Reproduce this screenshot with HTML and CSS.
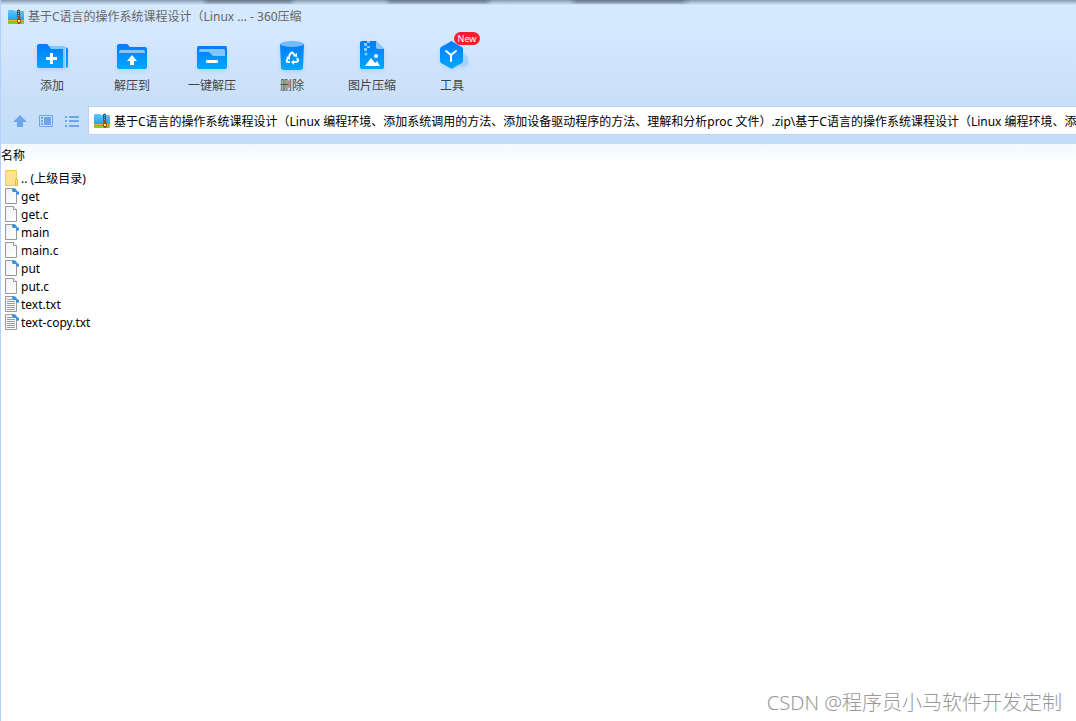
FILE: index.html
```html
<!DOCTYPE html>
<html lang="zh-CN">
<head>
<meta charset="utf-8">
<meta name="viewport" content="width=device-width, initial-scale=1">
<title>360压缩</title>
<link rel="stylesheet" href="styles.css">
</head>
<body>
<svg class="defs" aria-hidden="true">
  <defs>
    <linearGradient id="blue" x1="0" y1="0" x2="0" y2="1"><stop offset="0" stop-color="#007bfb"/><stop offset="1" stop-color="#01a8fd"/></linearGradient>
    <linearGradient id="sky" x1="0" y1="0" x2="0" y2="1"><stop offset="0" stop-color="#5dc8fa"/><stop offset="1" stop-color="#239bf0"/></linearGradient>
    <linearGradient id="paper" x1="0" y1="0" x2="1" y2="1"><stop offset="0" stop-color="#eef1f4"/><stop offset="1" stop-color="#fff"/></linearGradient>
    <symbol id="zip" viewBox="0 0 16 16">
      <path d="M0 2q0-1 1-1h5l1 1h8q1 0 1 1v9H0z" fill="url(#sky)"/>
      <path d="M0 11h16v1H0z" fill="#f9b01b"/><path d="M0 12h16v1H0z" fill="#f4812e"/><path d="M0 13h16v1q0 1-1 1H1q-1 0-1-1z" fill="#86c82d"/>
      <path d="M9 1h3v7H9z" fill="#285c94"/><path d="M10 0h1v1h-1zm0 2h1v1h-1zm0 2h1v1h-1zm0 2h1v1h-1z" fill="#d99a55"/>
      <path d="M10 7h2l1 5q0 3-2 3t-2-3z" fill="#a4480b"/><path d="M10 11h2v2h-2z" fill="#ffe5a4"/>
    </symbol>
    <symbol id="page" viewBox="0 0 14 16">
      <path d="M.5.5h8l3 3v12H.5z" fill="url(#paper)" stroke="#999"/><path d="M8.5.5v3h3" fill="#fff" stroke="#999"/>
    </symbol>
    <symbol id="mark" viewBox="0 0 14 16">
      <path d="M7 1l2-1 2 1 1 2 2 1v2l-1 1-2-1V4H8L7 3z" fill="#3a93dc"/>
    </symbol>
    <symbol id="lines" viewBox="0 0 14 16"><path d="M2 3.5h5M2 5.5h8M2 7.5h8M2 9.5h8M2 11.5h8M2 13.5h8" stroke="#9b9b9b"/></symbol>
  </defs>
</svg>
<div class="window">
  <header class="chrome">
    <div class="titlebar">
      <svg class="zip" viewBox="0 0 16 16"><use href="#zip"/></svg>
      <h1 class="title">基于C语言的操作系统课程设计（Linux ... - 360压缩</h1>
    </div>
    <div class="toolbar" role="toolbar">
      <button class="tool" type="button">
        <svg class="tool-icon" viewBox="0 0 40 36">
          <path d="M14 10h19v2H16z" fill="#7dc1fd"/><path d="M5 8q0-2 2-2h8l3 3h15v21H7q-2 0-2-2z" fill="url(#blue)"/>
          <path d="M17 8h14q2 0 2 2v20h-2V11H19z" fill="#83c7fe"/><path d="M34 9q2 1 2 3v16q0 2-2 2z" fill="url(#blue)"/>
          <path d="M19.500 15v11M14 20.500h11" stroke="#fff" stroke-width="3"/>
        </svg><span>添加</span>
      </button>
      <button class="tool" type="button">
        <svg class="tool-icon" viewBox="0 0 40 36">
          <path d="M5 8q0-2 2-2h8l3 3h15q2 0 2 2v18q0 2-2 2H7q-2 0-2-2z" fill="url(#blue)"/>
          <path d="M7 15v-1q0-2 2-2h22q2 0 2 2v1z" fill="#83c5ff"/><path d="M20 17l5 6h-3v4h-4v-4h-3z" fill="#fff"/>
        </svg><span>解压到</span>
      </button>
      <button class="tool" type="button">
        <svg class="tool-icon" viewBox="0 0 40 36">
          <rect x="5" y="8" width="30" height="23" rx="2" fill="url(#blue)"/>
          <path d="M7 14v-1q0-2 2-2h22q2 0 2 2v5H21l-4-4z" fill="#83c5ff"/><rect x="14" y="22" width="12" height="3" rx="1" fill="#fff"/>
        </svg><span>一键解压</span>
      </button>
      <button class="tool" type="button">
        <svg class="tool-icon" viewBox="0 0 40 36">
          <path d="M8 6l1 23q0 3 3 3h16q3 0 3-3l1-23z" fill="url(#blue)"/><ellipse cx="20" cy="6" rx="12" ry="3" fill="#72bcfc"/>
          <path d="M17 18l2-3q1-1 2 0l2 3M25 20l1 2q0 2-2 2h-3M18 24h-2q-2 0-1-2l2-3" fill="none" stroke="#fff" stroke-width="2"/>
          <path d="M25 15v4l-4-1zM22 22v5l-3-3zM14 19l4-1v4z" fill="#fff"/>
        </svg><span>删除</span>
      </button>
      <button class="tool" type="button">
        <svg class="tool-icon" viewBox="0 0 40 36">
          <path d="M8 5q0-2 2-2h14l8 8v18q0 2-2 2H10q-2 0-2-2z" fill="url(#blue)"/><path d="M24 3l8 8h-6q-2 0-2-2z" fill="#8ac8fe"/>
          <path d="M15 3h3v2h-3zm-3 2h3v3h-3zm3 3h3v2h-3zm-3 2h3v3h-3z" fill="#8acaff"/><circle cx="14" cy="16" r="1.500" fill="#8acaff"/>
          <circle cx="24" cy="18" r="2" fill="#fff"/><path d="M13 28l6-8 4 5 2-2 3 5z" fill="#fff"/>
        </svg><span>图片压缩</span>
      </button>
      <button class="tool" type="button">
        <svg class="tool-icon" viewBox="0 0 40 36">
          <path d="M31 16l5 3v7l-6 3-5-3z" fill="#a3d2ff"/>
          <path d="M19 3q1 0 2 1l9 5q1 1 1 2v12q0 1-1 2l-9 5q-1 1-3 0l-9-5q-1-1-1-2V11q0-1 1-2l9-5z" fill="url(#blue)"/>
          <path d="M14 13l5 4 5-4M19 17v6" fill="none" stroke="#fff" stroke-width="2" stroke-linecap="round"/>
        </svg><span>工具</span><em class="badge">New</em>
      </button>
    </div>
    <div class="navbar">
      <button class="nav" type="button" aria-label="上级目录"><svg viewBox="0 0 16 16"><path d="M8 2l7 7h-4v5H5V9H1z" fill="#6fa5ec"/></svg></button>
      <button class="nav" type="button" aria-label="预览"><svg viewBox="0 0 16 16"><path d="M1.500 2.500h13v11h-13z" fill="none" stroke="#6fa5ec"/><path d="M6 4h7v8H6zM3 4h2v2H3zm0 3h2v2H3zm0 3h2v2H3z" fill="#6fa5ec"/></svg></button>
      <button class="nav" type="button" aria-label="列表"><svg viewBox="0 0 16 16"><path d="M1 3h2v2H1zm4 0h10v2H5zM1 7h2v2H1zm4 0h10v2H5zM1 12h2v2H1zm4 0h10v2H5z" fill="#6fa5ec"/></svg></button>
      <div class="address">
        <svg class="zip" viewBox="0 0 16 16"><use href="#zip"/></svg>
        <input class="path" type="text" aria-label="路径" value="基于C语言的操作系统课程设计（Linux 编程环境、添加系统调用的方法、添加设备驱动程序的方法、理解和分析proc 文件）.zip\基于C语言的操作系统课程设计（Linux 编程环境、添加系统调用的方法">
      </div>
    </div>
  </header>
  <main class="files">
    <table class="list">
      <thead><tr><th scope="col">名称</th></tr></thead>
      <tbody>
        <tr><td><div class="file"><svg viewBox="0 0 14 16"><path d="M.5.5h11v15H.5z" fill="#ffe48d" stroke="#efc95b"/><path d="M10.500 9.500h2v6h-2z" fill="#ffe48d" stroke="#e5bb48"/></svg>.. (上级目录)</div></td></tr>
        <tr><td><div class="file"><svg viewBox="0 0 14 16"><use href="#page"/><use href="#mark"/></svg>get</div></td></tr>
        <tr><td><div class="file"><svg viewBox="0 0 14 16"><use href="#page"/></svg>get.c</div></td></tr>
        <tr><td><div class="file"><svg viewBox="0 0 14 16"><use href="#page"/><use href="#mark"/></svg>main</div></td></tr>
        <tr><td><div class="file"><svg viewBox="0 0 14 16"><use href="#page"/></svg>main.c</div></td></tr>
        <tr><td><div class="file"><svg viewBox="0 0 14 16"><use href="#page"/><use href="#mark"/></svg>put</div></td></tr>
        <tr><td><div class="file"><svg viewBox="0 0 14 16"><use href="#page"/></svg>put.c</div></td></tr>
        <tr><td><div class="file"><svg viewBox="0 0 14 16"><use href="#page"/><use href="#lines"/><use href="#mark"/></svg>text.txt</div></td></tr>
        <tr><td><div class="file"><svg viewBox="0 0 14 16"><use href="#page"/><use href="#lines"/><use href="#mark"/></svg>text-copy.txt</div></td></tr>
      </tbody>
    </table>
  </main>
  <footer class="credit">CSDN @程序员小马软件开发定制</footer>
</div>
</body>
</html>
```
FILE: styles.css
```css
* { box-sizing: border-box; }
body {
  margin: 0;
  background: #fff;
  color: #000;
  font: 12px/18px "Noto Sans", "Noto Sans CJK SC", sans-serif;
}
button, input { font: inherit; color: inherit; border: 0; padding: 0; background: none; }
svg { display: block; flex: none; }
.defs { position: absolute; width: 0; height: 0; }
.window {
  display: flex;
  flex-direction: column;
  min-height: 100vh;
  border-left: 1px solid #b4d2f8;
  overflow: hidden;
}
.chrome {
  padding-bottom: 9px;
  background:
    linear-gradient(rgba(122, 145, 168, 0.9), rgba(160, 190, 220, 0)) 0 0 / 100% 5px no-repeat,
    linear-gradient(#d5e9ff 0, #d3e7fe 40px, #c8dff8 105px, #c3ddf9 100%);
}
.chrome::before {
  content: "";
  display: block;
  height: 5px;
  background: linear-gradient(90deg, transparent 200px, #677888 208px, #677888 288px, transparent 295px, transparent 383px, #677888 391px, #677888 484px, transparent 492px, transparent 568px, #677888 576px, #677888 680px, transparent 690px);
  -webkit-mask-image: linear-gradient(#000, transparent);
  mask-image: linear-gradient(#000, transparent);
}
.titlebar { display: flex; align-items: center; gap: 4px; height: 24px; padding-left: 7px; }
.title { margin: 0; font-size: 12px; font-weight: 400; color: #666; }
.zip { width: 16px; height: 16px; }
.toolbar { display: flex; height: 77px; padding: 9px 0 0 11px; }
.tool {
  position: relative;
  display: flex;
  flex-direction: column;
  align-items: center;
  gap: 3px;
  width: 80px;
  height: 60px;
  color: #444;
}
.tool-icon { width: 40px; height: 36px; filter: drop-shadow(0 2px 2px rgba(80, 150, 220, 0.2)); }
.badge {
  position: absolute;
  top: -6px;
  left: 42px;
  width: 26px;
  height: 13px;
  border-radius: 7px;
  background: #fb1d2c;
  color: #fff;
  font-size: 9px;
  font-style: normal;
  line-height: 13px;
}
.navbar { display: flex; align-items: center; gap: 10px; padding-left: 11px; }
.nav { width: 16px; height: 16px; }
.nav svg { width: 16px; height: 16px; }
.address {
  display: flex;
  flex: 1;
  align-items: center;
  gap: 4px;
  min-width: 0;
  height: 29px;
  padding-left: 5px;
  border: 1px solid #b9d4f3;
  border-right: 0;
  margin-left: -2px;
  background: #fff;
}
.path { flex: 1; min-width: 0; height: 26px; outline: 0; }
.files { flex: 1; background: linear-gradient(#f3f9ff, #fff 22px); }
.list { width: 100%; border-collapse: collapse; }
.list th { height: 26px; padding: 0; font-weight: 400; line-height: 24px; text-align: left; vertical-align: top; }
.list td { height: 18px; padding: 0; }
.file { display: flex; align-items: flex-start; gap: 2px; height: 18px; padding-left: 4px; }
.file svg { width: 14px; height: 16px; }
.credit {
  align-self: flex-end;
  padding: 0 14px 3px 0;
  color: #999;
  font: 300 20px/30px "Noto Sans", "Noto Sans CJK SC", sans-serif;
}
```
